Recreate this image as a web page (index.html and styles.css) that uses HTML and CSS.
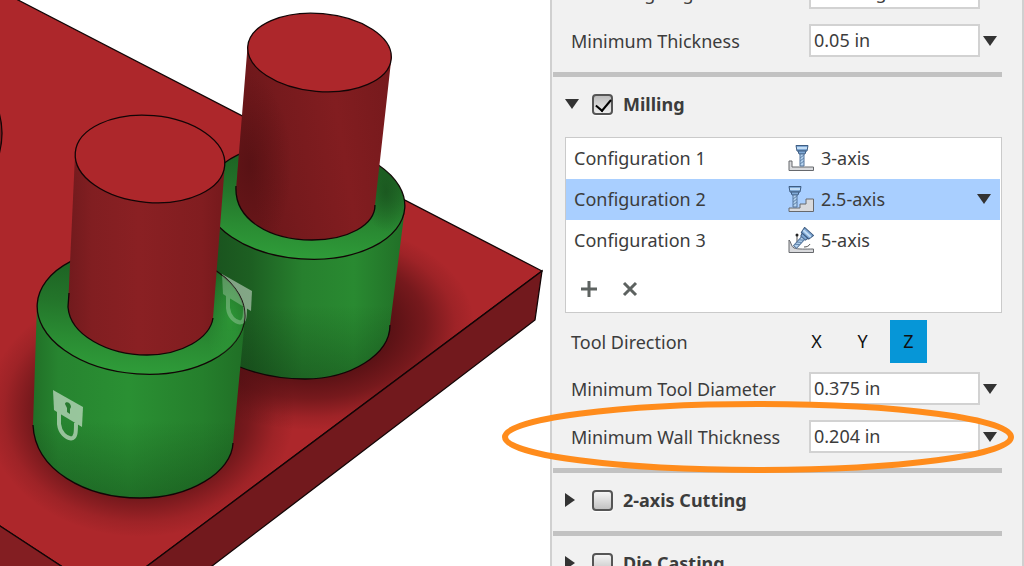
FILE: index.html
```html
<!DOCTYPE html>
<html lang="en">
<head>
  <meta charset="UTF-8">
  <meta name="viewport" content="width=device-width, initial-scale=1.0">
  <title>Manufacturing Constraints</title>
  <link rel="stylesheet" href="styles.css">
</head>
<body>

  <div class="workspace">
    <!-- Model view -->
    <div class="viewport">
      <svg class="model" viewBox="0 0 550 566" preserveAspectRatio="xMinYMin slice" role="img" aria-label="Plate with two pins and collars">
        <defs>
          <linearGradient id="pin-front" x1="0" x2="1">
            <stop offset="0" stop-color="#711a1d"/>
            <stop offset="0.15" stop-color="#811e21"/>
            <stop offset="0.45" stop-color="#8a2023"/>
            <stop offset="0.85" stop-color="#811d20"/>
            <stop offset="1" stop-color="#75191c"/>
          </linearGradient>
          <linearGradient id="pin-back" x1="0" x2="1" y1="0.2" y2="0">
            <stop offset="0" stop-color="#6c171a"/>
            <stop offset="0.25" stop-color="#761a1d"/>
            <stop offset="0.6" stop-color="#821d20"/>
            <stop offset="1" stop-color="#75191c"/>
          </linearGradient>
          <linearGradient id="ring-front" x1="0" x2="1">
            <stop offset="0" stop-color="#217027"/>
            <stop offset="0.12" stop-color="#278430"/>
            <stop offset="0.45" stop-color="#2a9033"/>
            <stop offset="0.8" stop-color="#257f2c"/>
            <stop offset="1" stop-color="#206f26"/>
          </linearGradient>
          <linearGradient id="ring-back" x1="0" x2="1">
            <stop offset="0" stop-color="#194f1d"/>
            <stop offset="0.25" stop-color="#1d5f22"/>
            <stop offset="0.5" stop-color="#27802e"/>
            <stop offset="0.75" stop-color="#298a31"/>
            <stop offset="1" stop-color="#216f27"/>
          </linearGradient>
          <linearGradient id="rim" x1="0" x2="0" y1="0" y2="1">
            <stop offset="0" stop-color="#1b5a20"/>
            <stop offset="0.45" stop-color="#23742a"/>
            <stop offset="0.75" stop-color="#2a8c33"/>
            <stop offset="1" stop-color="#2f9c39"/>
          </linearGradient>
          <linearGradient id="fade-down" x1="0" x2="0" y1="0" y2="1">
            <stop offset="0.6" stop-color="#0c3010" stop-opacity="0"/>
            <stop offset="1" stop-color="#0c3010" stop-opacity="0.35"/>
          </linearGradient>
          <radialGradient id="shadow">
            <stop offset="0.5" stop-color="#400b0e" stop-opacity="0.75"/>
            <stop offset="0.7" stop-color="#400b0e" stop-opacity="0.5"/>
            <stop offset="0.88" stop-color="#400b0e" stop-opacity="0.14"/>
            <stop offset="1" stop-color="#400b0e" stop-opacity="0"/>
          </radialGradient>
          <radialGradient id="pin-shade">
            <stop offset="0" stop-color="#3c0a0c" stop-opacity="0.4"/>
            <stop offset="1" stop-color="#3c0a0c" stop-opacity="0"/>
          </radialGradient>
          <radialGradient id="rim-shade">
            <stop offset="0" stop-color="#174a1b" stop-opacity="0.6"/>
            <stop offset="1" stop-color="#174a1b" stop-opacity="0"/>
          </radialGradient>
          <radialGradient id="rim-light">
            <stop offset="0" stop-color="#2f9c39" stop-opacity="0.8"/>
            <stop offset="1" stop-color="#2f9c39" stop-opacity="0"/>
          </radialGradient>
          <clipPath id="top-face">
            <path d="M-20 -20 L542 271 L107 596 L-20 513 Z"/>
          </clipPath>
          <clipPath id="back-pin-side">
            <path d="M247.5 47 L236 190 C236 220 270 240 312 240 C348 240 375 225 375 205 L391.5 57 Z"/>
          </clipPath>
          <clipPath id="back-ring-top">
            <ellipse cx="305" cy="201" rx="100" ry="58" transform="rotate(4 305 201)"/>
          </clipPath>
          <clipPath id="front-ring-top">
            <ellipse cx="141" cy="311" rx="104" ry="63" transform="rotate(4 141 311)"/>
          </clipPath>
          <g id="lock">
            <path d="M0 0 L30 17 L29 37 L24 34 L4 22 L1 20 Z"/>
            <path d="M6 22 V34 C7 43 13 48 18 48.500 C23 48 23 42 23 33" fill="none" stroke="#fff" stroke-width="4"/>
          </g>
        </defs>

        <!-- Plate -->
        <path class="edge" fill="#ad272b" d="M-20 -20 L18 0 L542 271 L107 596 L-20 513 Z"/>
        <g clip-path="url(#top-face)">
          <ellipse cx="140" cy="412" rx="155" ry="125" fill="url(#shadow)"/>
          <ellipse cx="310" cy="325" rx="165" ry="105" fill="url(#shadow)"/>
        </g>
        <path class="edge" fill="#72191d" d="M542 271 L535 320 L107 646 L107 596 Z"/>
        <path class="edge" fill="#831e22" d="M-20 513 L107 596 L107 646 L-20 600 Z"/>
        <path class="edge" fill="#7b1b1f" d="M-2 109 Q6 133 -2 158"/>

        <!-- Back collar and pin -->
        <path fill="url(#ring-back)" d="M205 194 L200 330 C206 362 262 379 305 379 C350 379 390 355 390 325 L405 208 Z"/>
        <path fill="url(#fade-down)" d="M205 194 L200 330 C206 362 262 379 305 379 C350 379 390 355 390 325 L405 208 Z"/>
        <path class="edge" fill="none" d="M200 330 C206 362 262 379 305 379 C350 379 390 355 390 325"/>
        <ellipse class="edge" cx="305" cy="201" rx="100" ry="58" fill="url(#rim)" transform="rotate(4 305 201)"/>
        <g clip-path="url(#back-ring-top)">
          <ellipse cx="386" cy="192" rx="22" ry="40" fill="url(#rim-shade)"/>
        </g>
        <path fill="url(#pin-back)" d="M247.500 47 L236 190 C236 220 270 240 312 240 C348 240 375 225 375 205 L391.500 57 Z"/>
        <g clip-path="url(#back-pin-side)">
          <ellipse cx="250" cy="165" rx="42" ry="90" fill="url(#pin-shade)"/>
        </g>
        <path class="edge" fill="none" d="M236 186 C234 220 270 240 312 240 C348 240 375 225 375 205"/>
        <ellipse class="edge" cx="319.500" cy="52.500" rx="72" ry="39" fill="#ad272b" transform="rotate(5 319.500 52.500)"/>
        <use href="#lock" x="222" y="274" fill="#fff" opacity="0.45"/>

        <!-- Front collar and pin -->
        <path fill="url(#ring-front)" d="M37 304 L33 425 C35 470 85 498 140 498 C190 498 232 472 233 443 L245 318 Z"/>
        <path fill="url(#fade-down)" d="M37 304 L33 425 C35 470 85 498 140 498 C190 498 232 472 233 443 L245 318 Z"/>
        <path class="edge" fill="none" d="M33 425 C35 470 85 498 140 498 C190 498 232 472 233 443"/>
        <ellipse class="edge" cx="141" cy="311" rx="104" ry="63" fill="url(#rim)" transform="rotate(4 141 311)"/>
        <g clip-path="url(#front-ring-top)">
          <ellipse cx="230" cy="318" rx="24" ry="60" fill="url(#rim-light)"/>
          <use href="#lock" x="222" y="274" fill="#fff" opacity="0.25"/>
        </g>
        <path fill="url(#pin-front)" d="M75 155 L68 307 C70 335 108 355 147 355 C182 355 210 338 213 318 L225 163 Z"/>
        <path class="edge" fill="none" d="M69 293 L68 307 C70 335 108 355 147 355 C182 355 210 338 213 318"/>
        <ellipse class="edge" cx="150" cy="159" rx="75" ry="43.500" fill="#ad272b" transform="rotate(5 150 159)"/>
        <g opacity="0.52">
          <use href="#lock" x="53" y="390" fill="#fff"/>
        </g>
        <path fill="#287a30" d="M65 404 C65 401 71 402 71 407 L70 409 V414 L67 412 V408 Z"/>
      </svg>
    </div>

    <!-- Constraint settings -->
    <form class="panel">
      <div class="panel-content">
        <section class="group">
          <div class="field">
            <label for="overhang">Overhang Angle</label>
            <input id="overhang" type="text" value="45.0 deg">
            <button type="button" class="menu-btn" aria-label="Overhang angle options"><span class="arrow-down"></span></button>
          </div>
          <div class="field">
            <label for="thickness">Minimum Thickness</label>
            <input id="thickness" type="text" value="0.05 in">
            <button type="button" class="menu-btn" aria-label="Thickness options"><span class="arrow-down"></span></button>
          </div>
        </section>

        <section class="group">
          <div class="group-title">
            <button type="button" class="toggle" aria-label="Collapse Milling"><span class="arrow-down"></span></button>
            <input id="milling" type="checkbox" checked>
            <label for="milling">Milling</label>
          </div>

          <div class="config-box">
            <table class="configs">
              <tr>
                <td class="config-name">Configuration 1</td>
                <td class="config-icon">
                  <svg viewBox="0 0 26 26">
                    <path class="stock" d="M1 16 H4 V22 H25.500 V25.500 H1 Z"/>
                    <path class="tool" d="M8 0.500 H20 L19 6 H9 Z"/>
                    <path class="shine" d="M9 3 H19"/>
                    <path class="tool" d="M10 6 H18 L17 9 H11 Z"/>
                    <path class="bit" d="M12 9 H16 V21 H12 Z"/>
                    <path class="flute" d="M12 13 L16 10 M12 16 L16 13 M12 19 L16 16"/>
                  </svg>
                </td>
                <td>3-axis</td>
                <td></td>
              </tr>
              <tr class="selected">
                <td class="config-name">Configuration 2</td>
                <td class="config-icon">
                  <svg viewBox="0 0 26 26">
                    <path class="stock" d="M1 22 H12 V18 H18 V13 H25.500 V25.500 H1 Z"/>
                    <path class="tool" d="M1 0.500 H13 L12 6 H2 Z"/>
                    <path class="shine" d="M2 3 H12"/>
                    <path class="tool" d="M3 6 H11 L10 9 H4 Z"/>
                    <path class="bit" d="M5 9 H9 V21 H5 Z"/>
                    <path class="flute" d="M5 13 L9 10 M5 16 L9 13 M5 19 L9 16"/>
                  </svg>
                </td>
                <td>2.5-axis</td>
                <td class="config-menu"><button type="button" class="menu-btn" aria-label="Change axis type"><span class="arrow-down"></span></button></td>
              </tr>
              <tr>
                <td class="config-name">Configuration 3</td>
                <td class="config-icon">
                  <svg viewBox="0 0 26 26">
                    <path class="stock" d="M1 13 C3 14 3 20 6 21 C10 22.500 18 22 25.500 22 V25.500 H1 Z"/>
                    <path class="orbit" d="M9 17 V9 M16 20 C19 20 21 19 22 17"/>
                    <circle cx="9" cy="8" r="1.500" fill="#222"/>
                    <g transform="rotate(42 7 20)">
                      <path class="tool" d="M1 -1 H13 L12 5 H2 Z"/>
                      <path class="shine" d="M2 2 H12"/>
                      <path class="tool" d="M3 5 H11 L10 8 H4 Z"/>
                      <path class="bit" d="M5 8 H9 V20 H5 Z"/>
                      <path class="flute" d="M5 12 L9 9 M5 15 L9 12 M5 18 L9 15"/>
                    </g>
                  </svg>
                </td>
                <td>5-axis</td>
                <td></td>
              </tr>
            </table>
            <div class="config-actions">
              <button type="button" aria-label="Add configuration">
                <svg viewBox="0 0 16 16"><path d="M8 0 V16 M0 8 H16"/></svg>
              </button>
              <button type="button" aria-label="Remove configuration">
                <svg viewBox="0 0 16 16"><path d="M2 2 L14 14 M14 2 L2 14"/></svg>
              </button>
            </div>
          </div>

          <div class="field direction">
            <span>Tool Direction</span>
            <div class="axis-buttons">
              <button type="button">X</button>
              <button type="button">Y</button>
              <button type="button" class="active">Z</button>
            </div>
          </div>
          <div class="field">
            <label for="diameter">Minimum Tool Diameter</label>
            <input id="diameter" type="text" value="0.375 in">
            <button type="button" class="menu-btn" aria-label="Tool diameter options"><span class="arrow-down"></span></button>
          </div>
          <div class="field highlighted">
            <label for="wall">Minimum Wall Thickness</label>
            <input id="wall" type="text" value="0.204 in">
            <button type="button" class="menu-btn" aria-label="Wall thickness options"><span class="arrow-down"></span></button>
            <svg class="callout" viewBox="0 0 514 74" preserveAspectRatio="none">
              <ellipse cx="257" cy="37" rx="253" ry="33"/>
            </svg>
          </div>
        </section>

        <section class="group">
          <div class="group-title">
            <button type="button" class="toggle" aria-label="Expand 2-axis Cutting"><span class="arrow-right"></span></button>
            <input id="cutting" type="checkbox">
            <label for="cutting">2-axis Cutting</label>
          </div>
        </section>

        <section class="group">
          <div class="group-title">
            <button type="button" class="toggle" aria-label="Expand Die Casting"><span class="arrow-right"></span></button>
            <input id="casting" type="checkbox">
            <label for="casting">Die Casting</label>
          </div>
        </section>
      </div>
    </form>
  </div>

</body>
</html>
```
FILE: styles.css
```css
* {
  margin: 0;
  padding: 0;
  box-sizing: border-box;
}

body {
  font-family: "Noto Sans", "Open Sans", sans-serif;
  font-size: 18px;
  line-height: 24px;
  color: #3c3c3c;
  background-color: #fff;
}

button,
input {
  font: inherit;
  color: inherit;
}

button {
  border: none;
  background: none;
  cursor: pointer;
}

.workspace {
  display: grid;
  grid-template-columns: minmax(0, 1fr) 474px;
  grid-template-rows: minmax(0, 1fr);
  height: 100vh;
  overflow: hidden;
}

/* Model view */
.viewport {
  overflow: hidden;
}

.model {
  display: block;
  width: 100%;
  height: 100%;
}

.edge {
  stroke: #120506;
  stroke-width: 1.3;
}

/* Panel */
.panel {
  background-color: #f1f1f1;
  border-left: 2px solid #d0d0d0;
  border-right: 2px solid #d0d0d0;
  padding: 0 20px 0 1px;
}

/* list is scrolled, the first row is partly hidden */
.panel-content {
  margin-top: -24px;
}

.group + .group {
  border-top: 5px solid #c2c2c2;
}

.group-title {
  display: flex;
  align-items: center;
  height: 54px;
  margin-bottom: 4px;
  padding-left: 12px;
  font-weight: bold;
}

.toggle {
  display: flex;
  width: 27px;
}

.group-title label {
  margin-left: 10px;
}

.group-title input {
  appearance: none;
  width: 21px;
  height: 21px;
  border: 2px solid #555;
  border-radius: 4px;
  background: linear-gradient(#f4f4f4, #c2c2c2);
  box-shadow: 0 1px 1px #fff;
}

.group-title input:checked {
  background: linear-gradient(#bdbdbd, #ededed);
}

.group-title input:checked::after {
  content: "";
  display: block;
  width: 7px;
  height: 13px;
  margin-left: 5px;
  border: solid #000;
  border-width: 0 2px 2px 0;
  transform: rotate(40deg);
}

.arrow-down {
  display: block;
  border: 7px solid transparent;
  border-top: 10px solid #333;
  border-bottom: none;
}

.arrow-right {
  display: block;
  border: 7px solid transparent;
  border-left: 10px solid #333;
  border-right: none;
}

/* Fields */
.field {
  display: grid;
  grid-template-columns: 1fr 171px 22px;
  align-items: center;
  padding-left: 18px;
  margin-bottom: 15px;
}

.field input {
  width: 100%;
  height: 33px;
  padding: 0 3px 2px;
  border: 2px solid #d2d2d2;
  background-color: #fff;
}

.menu-btn {
  display: flex;
  padding-left: 3px;
}

.direction {
  grid-template-columns: 1fr 193px;
  margin-bottom: 9px;
}

.axis-buttons {
  display: flex;
  gap: 9px;
  margin-left: -11px;
}

.axis-buttons button {
  width: 37px;
  height: 43px;
  padding-bottom: 2px;
  color: #111;
}

.axis-buttons .active {
  background-color: #0696d7;
}

.highlighted {
  position: relative;
}

.callout {
  position: absolute;
  top: -20px;
  left: -52px;
  width: calc(100% + 65px);
  height: 74px;
  fill: none;
  stroke: #ff8c1c;
  stroke-width: 6;
  pointer-events: none;
}

/* Configurations */
.config-box {
  margin: 6px 0 7px 12px;
  padding-right: 1px;
  border: 1px solid #cacaca;
  background-color: #fff;
}

.configs {
  width: 100%;
  border-collapse: collapse;
}

.configs td {
  height: 41px;
  padding-bottom: 2px;
}

.configs .config-name {
  width: 222px;
  padding-left: 8px;
}

.config-icon {
  width: 33px;
}

.config-icon svg {
  display: block;
  width: 26px;
  height: 26px;
}

.config-menu {
  width: 26px;
}

.selected {
  background-color: #a9cfff;
}

.stock {
  fill: #d9dadd;
  stroke: #66686c;
}

.tool {
  fill: #7fa9d6;
  stroke: #3f5d82;
}

.shine {
  stroke: #c3ddf5;
  stroke-width: 2;
}

.bit {
  fill: #b5d3ef;
  stroke: #53739a;
}

.flute {
  fill: none;
  stroke: #5f82aa;
}

.orbit {
  fill: none;
  stroke: #555;
}

.config-actions {
  display: flex;
  gap: 25px;
  padding: 20px 15px 15px;
}

.config-actions button {
  display: flex;
}

.config-actions svg {
  width: 16px;
  height: 16px;
  fill: none;
  stroke: #5d6260;
  stroke-width: 3;
}
```
